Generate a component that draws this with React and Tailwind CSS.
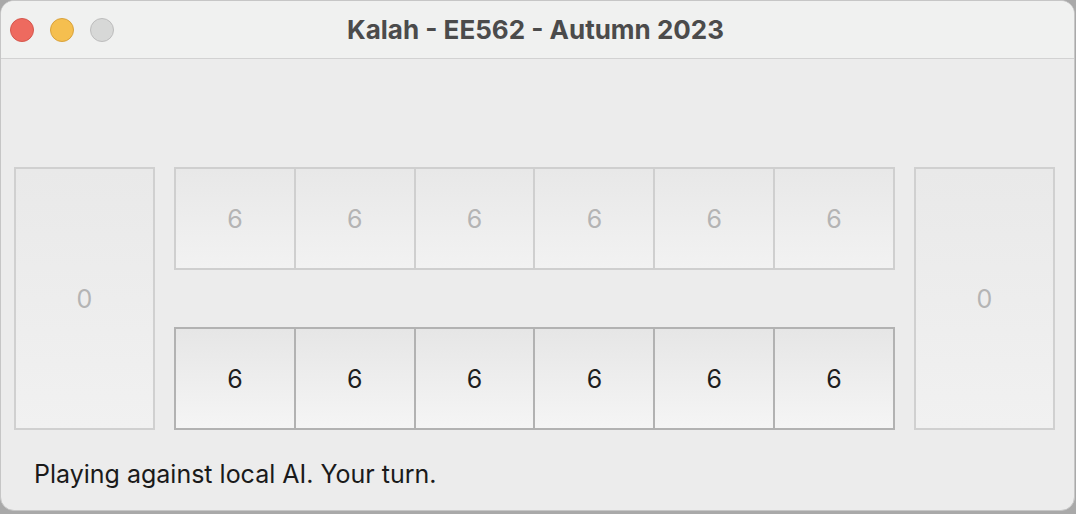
import React from 'react'

const font = { fontFamily: 'Inter, "Liberation Sans", Arial, sans-serif' }

function Store({ count }) {
  return (
    <div className="w-[141px] h-[263px] shrink-0 border-2 border-[#d0d0d0] bg-gradient-to-b from-[#e9e9e9] to-[#f1f1f1] flex items-center justify-center pt-[3px] text-[25px] text-[#b4b4b4]">
      {count}
    </div>
  )
}

function PitRow({ pits, active }) {
  return (
    <div
      className={
        'h-[103px] flex border-2 ' +
        (active ? 'border-[#b2b2b2]' : 'border-[#cfcfcf]')
      }
    >
      {pits.map((n, i) => (
        <div
          key={i}
          className={
            'flex-1 flex items-center justify-center pt-[3px] text-[25px] ' +
            (i > 0 ? (active ? 'border-l-2 border-[#b2b2b2] ' : 'border-l-2 border-[#cfcfcf] ') : '') +
            (active
              ? 'bg-gradient-to-b from-[#e6e6e6] to-[#f5f5f5] text-[#1e1e1e]'
              : 'bg-gradient-to-b from-[#e8e8e8] to-[#f2f2f2] text-[#b4b4b4]')
          }
        >
          {n}
        </div>
      ))}
    </div>
  )
}

export default function App() {
  const top = [6, 6, 6, 6, 6, 6]
  const bottom = [6, 6, 6, 6, 6, 6]

  return (
    <div className="h-[514px] w-[1076px] bg-[#a9a9a9] overflow-hidden" style={font}>
      <div className="h-[511px] w-[1075px] bg-[#ececec] rounded-[14px] border border-[#c6c6c6] overflow-hidden flex flex-col">
        {/* title bar */}
        <div className="h-[58px] shrink-0 bg-[#f0f1f0] border-b border-[#d2d2d2] flex items-center relative">
          <div className="flex items-center gap-4 pl-[9px]">
            <span className="w-6 h-6 rounded-full bg-[#ee6a5f] border border-[#d5574d]" />
            <span className="w-6 h-6 rounded-full bg-[#f5bf4f] border border-[#d9a23b]" />
            <span className="w-6 h-6 rounded-full bg-[#d7d8d7] border border-[#bdbdbd]" />
          </div>
          <div className="absolute inset-0 flex items-center justify-center pointer-events-none">
            <span className="text-[26px] font-bold text-[#4b4b4b] -ml-[4px]">Kalah - EE562 - Autumn 2023</span>
          </div>
        </div>

        {/* board */}
        <div className="flex items-start gap-[19px] pl-[13px] pt-[108px]">
          <Store count={0} />
          <div className="w-[721px] flex flex-col gap-[57px]">
            <PitRow pits={top} />
            <PitRow pits={bottom} active />
          </div>
          <Store count={0} />
        </div>

        <div className="pl-[33px] pt-[28px] text-[25px] leading-[32px] text-[#1a1a1a]">
          Playing against local AI. Your turn.
        </div>
      </div>
    </div>
  )
}
